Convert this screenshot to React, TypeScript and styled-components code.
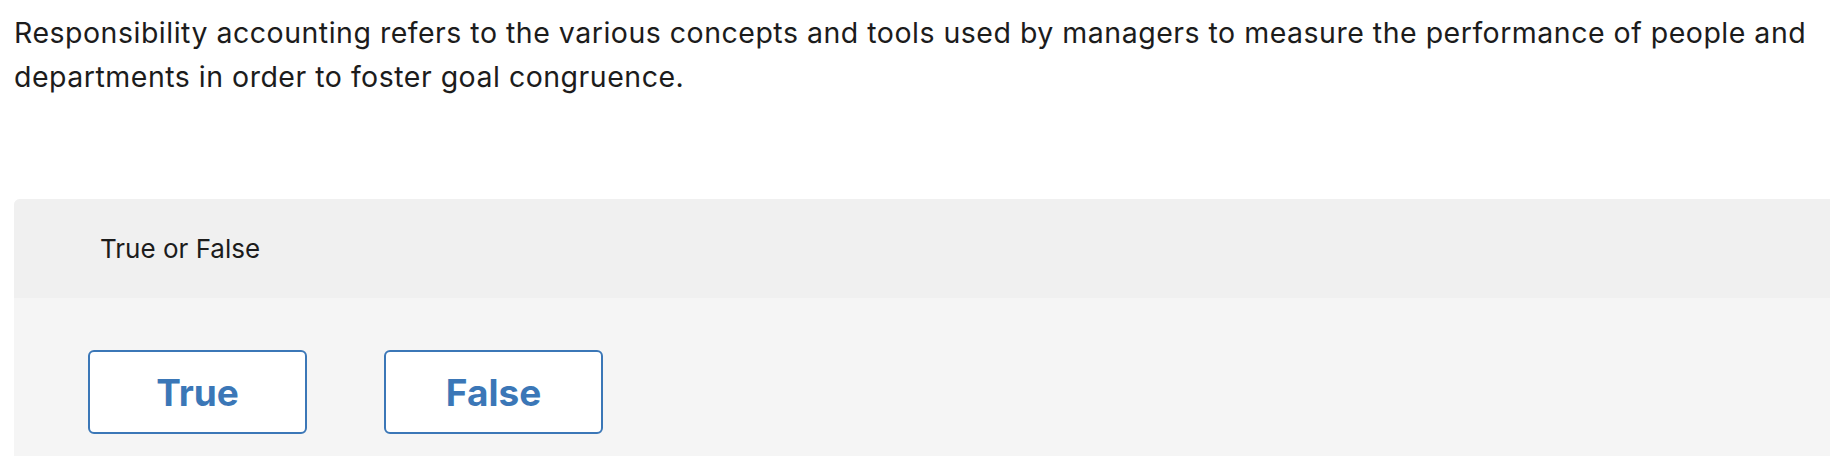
import React from 'react';
import styled, { createGlobalStyle } from 'styled-components';

const GlobalStyle = createGlobalStyle`
    html, body {
        margin: 0;
        padding: 0;
        background: #ffffff;
        overflow: hidden;
    }
    body {
        font-family: Inter, "Open Sans", sans-serif;
        color: #1c1c1c;
    }
`;

const Page = styled.div`
    width: 1830px;
    height: 456px;
    overflow: hidden;
`;

const Prompt = styled.p`
    margin: 0;
    padding: 11px 0 0 14px;
    font-size: 28.5px;
    letter-spacing: 0.5px;
    line-height: 44px;
    color: #1c1c1c;
`;

const Panel = styled.section`
    margin: 100px 0 0 14px;
    border-radius: 6px 0 0 0;
    overflow: hidden;
    background: #f5f5f5;
`;

const PanelHeader = styled.div`
    display: flex;
    align-items: center;
    height: 99px;
    padding-left: 86px;
    background: #f0f0f0;
    font-size: 26px;
    color: #1c1c1c;
`;

const Choices = styled.div`
    display: flex;
    gap: 77px;
    padding: 52px 74px 40px;
`;

const Choice = styled.button`
    width: 219px;
    height: 84px;
    box-sizing: border-box;
    border: 2px solid #3b77b7;
    border-radius: 6px;
    background: #ffffff;
    color: #3b77b7;
    font-family: Inter, "Open Sans", sans-serif;
    font-weight: 700;
    font-size: 37px;
    cursor: pointer;
`;

export default function App() {
    return (
        <Page>
            <GlobalStyle />
            <Prompt>
                Responsibility accounting refers to the various concepts and tools used by managers to measure the
                performance of people and departments in order to foster goal congruence.
            </Prompt>
            <Panel>
                <PanelHeader>True or False</PanelHeader>
                <Choices>
                    <Choice>True</Choice>
                    <Choice>False</Choice>
                </Choices>
            </Panel>
        </Page>
    );
}
